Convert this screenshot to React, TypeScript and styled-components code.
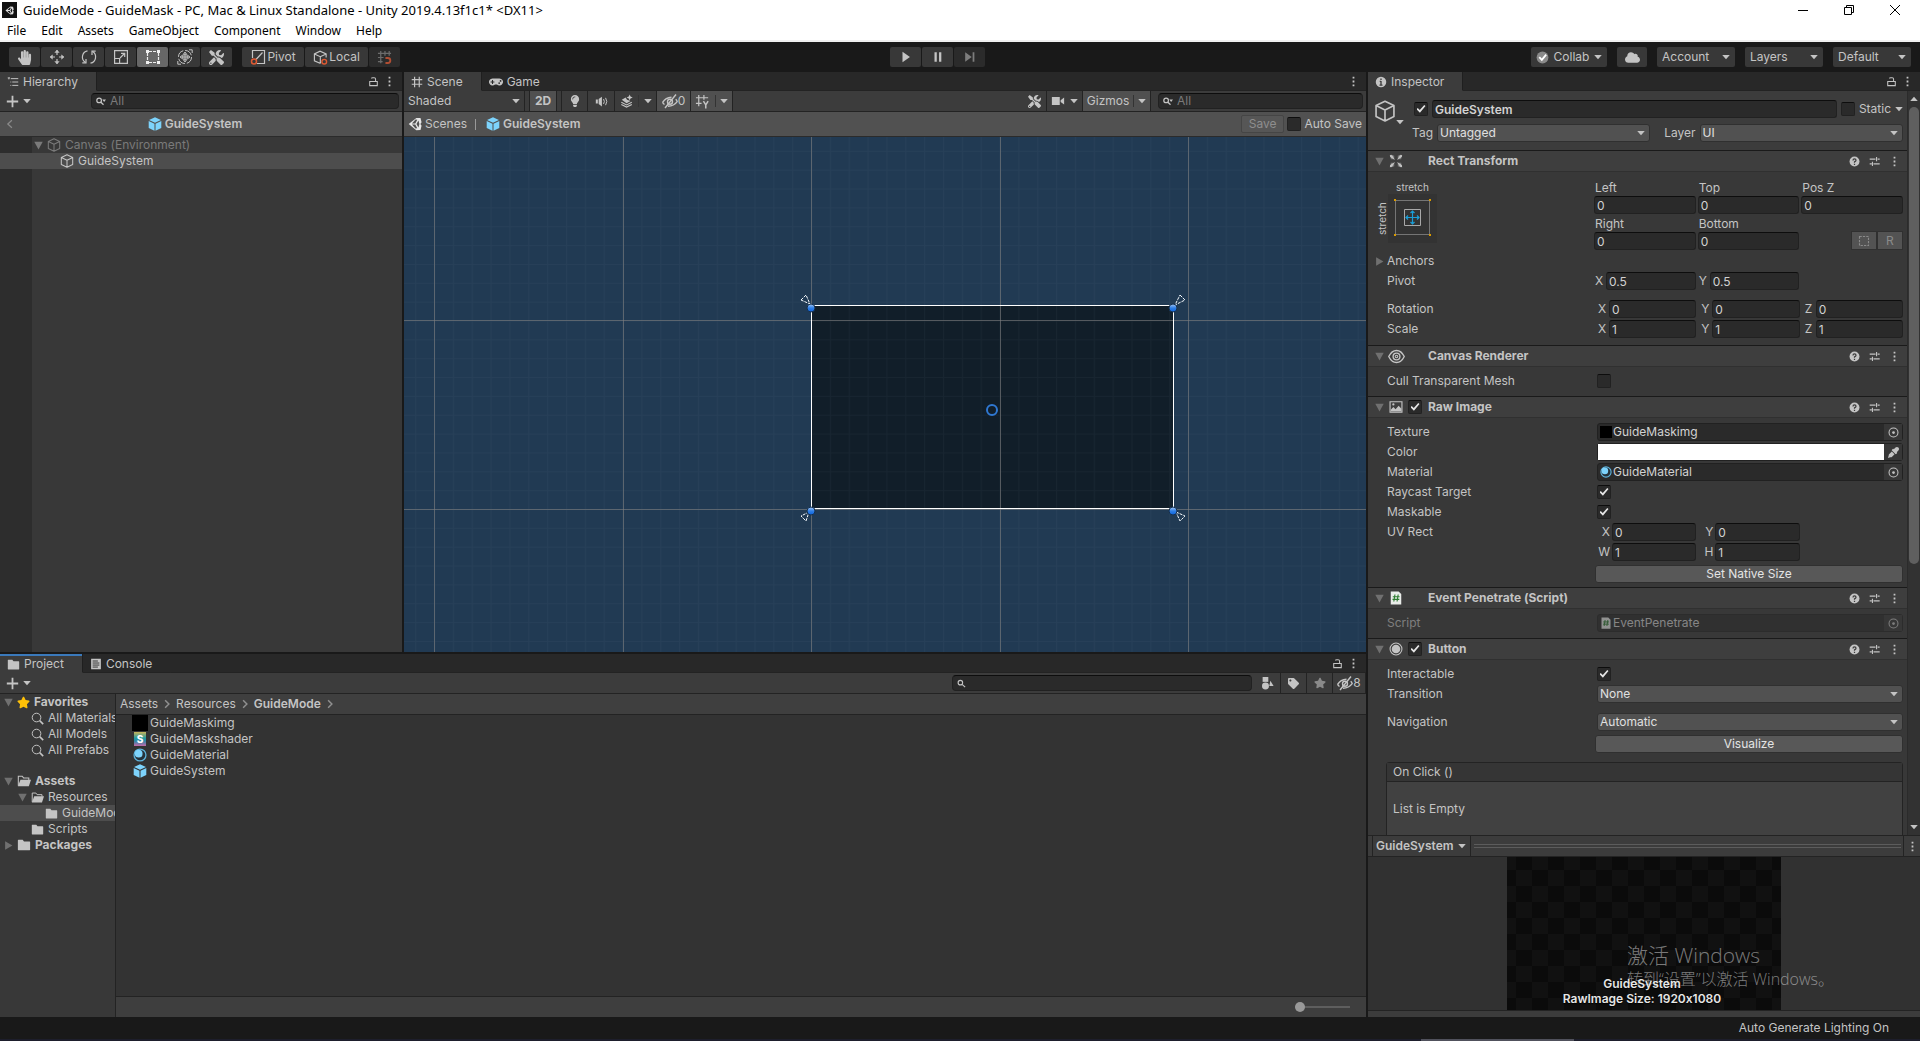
import React, { useId } from 'react';
import styled, { createGlobalStyle, css } from 'styled-components';
import { FaHandPaper, FaGamepad, FaCloud, FaLightbulb, FaTools, FaStar, FaTag, FaEyeDropper } from 'react-icons/fa';

const c = {
  chrome: '#191919',
  strip: '#282828',
  panel: '#383838',
  bar: '#3c3c3c',
  crumb: '#515151',
  line: '#232323',
  field: '#2a2a2a',
  text: '#c4c4c4',
  dim: '#7a7a7a',
  selected: '#4d4d4d',
  blue: '#7dd3fc',
};

const GlobalStyle = createGlobalStyle`
  *, *::before, *::after { box-sizing: border-box; }
  body { margin: 0; background: ${c.chrome}; }
  body, button, input, select {
    font-family: Inter, "Noto Sans CJK SC", sans-serif;
    font-size: 12px;
    line-height: 16px;
    font-feature-settings: "calt" 0;
    color: ${c.text};
  }
  button, input, select { margin: 0; padding: 0; border: 0; background: none; border-radius: 0; outline: 0; }
  ul { list-style: none; margin: 0; padding: 0; }
  svg { display: block; flex: none; }
`;

/* ---------- icons ---------- */

const stroke = { fill: 'none', stroke: 'currentColor' };
const cubeFaces = (
  <g fill="currentColor">
    <path d="M8 .4 14.800 3.300 8 6.600 1.200 3.300z" />
    <path d="M.8 4.500 7.400 7.600V15.600L.8 12.500z" />
    <path d="M15.200 4.500 8.600 7.600V15.600L15.200 12.500z" />
  </g>
);
const scriptPage = (
  <g>
    <path d="M2 .5h9L14 3.500v12H2z" fill="#e9ece9" />
    <path d="M6.800 4 5.500 12M10.500 4 9.200 12M4.300 6.600h7.800M4 9.500h7.800" stroke="#2e7d32" strokeWidth="1.300" fill="none" />
  </g>
);

const shapes: Record<string, React.ReactNode> = {
  unity: <g fill="currentColor" fillRule="evenodd"><path d="M.8 8 9.500 1l4.800.2L15.500 6l-1.300 2 1.300 2-1.200 4.800-4.800.2zM4.500 7.300H8.300L10.600 3.200 8.600 2.900zM4.500 8.700 8.600 13.100l2-.3L8.300 8.700zM9.700 8 11.900 12l1-3.500V7.500L11.900 4z" /></g>,
  move: <g {...stroke} strokeWidth="1.2"><path d="M8 1v5M8 10v5M1 8h5M10 8h5" /><path d="M5.800 3.400 8 1.200l2.200 2.200zM5.800 12.600 8 14.800l2.200-2.200zM3.400 5.800 1.200 8l2.200 2.200zM12.600 5.800 14.800 8l-2.200 2.200z" fill="currentColor" strokeWidth=".5" /></g>,
  rotate: <g {...stroke} strokeWidth="1.2"><path d="M6.500 1.800A6.300 6.300 0 0 0 4.500 13.400M9.500 14.200A6.300 6.300 0 0 0 11.500 2.600" /><path d="M1.300 13.800h3.700V10M14.700 2.200H11V6" /></g>,
  scale: <g {...stroke} strokeWidth="1.2"><path d="M1.600 1.600h12.800v12.800H1.600zM1.600 9.500h5v4.900M7 9l4.500-4.500M8 4.300h3.700V8" /></g>,
  rect: <g {...stroke} strokeWidth="1.2"><path d="M4 2.500h8M4 13.500h8M2.500 4v8M13.500 4v8" strokeDasharray="3 1" /><path d="M1 1h3v3H1zM12 1h3v3h-3zM1 12h3v3H1zM12 12h3v3h-3z" fill="currentColor" stroke="none" /></g>,
  transform: <g {...stroke}><circle cx="8" cy="8" r="6.500" strokeDasharray="8 2" /><path d="M8 3v10M3 8h10M6.500 4.800 8 3.200 9.500 4.800M6.500 11.200 8 12.800 9.500 11.200M4.800 6.500 3.200 8 4.800 9.500M11.200 6.500 12.800 8 11.200 9.500" /><path d="M12 .8h3.200V4M.8 12v3.200H4M5.800 5.800h4.400v4.400H5.800z" /></g>,
  pivot: <g {...stroke} strokeWidth="1.200"><path d="M2.500 9V1.500h12v13H7M6 10.500l6.500-7" /><circle cx="4" cy="12.500" r="2.500" stroke="#e05a33" strokeWidth="1.500" /></g>,
  local: <g {...stroke} strokeWidth="1.200"><path d="M8 14.500 1.500 11.500V4.200L7.500 1.200l6.500 3V8M1.500 4.200 7.800 7.200l6.200-3M7.800 7.200v7" /><circle cx="12" cy="12.500" r="2.500" stroke="#e05a33" strokeWidth="1.500" /></g>,
  snap: <g {...stroke} strokeWidth="1.300"><path d="M4 1v13M8.500 1v5M13 1v5M1 3.500h14M1 8h6M1 12.500h5" opacity=".8" /><path d="M9 8.500h2.500a2.700 2.700 0 0 1 0 5.400H9" stroke="#b04e33" strokeWidth="2" /></g>,
  hierarchy: <g {...stroke} strokeWidth="1.300"><path d="M5 3.500h10M7 8h8M7 12.500h8M1 2.500h3M2.500 2.500v2M4.500 8H5.700M4.500 12.500h1.200" /></g>,
  lock: <g {...stroke} strokeWidth="1.500"><path d="M2.500 8h11v6h-11zM11 8V4.500Q11 2.500 9 2.500H7Q5 2.500 5 3.800" /></g>,
  dots: <g fill="currentColor"><path d="M6.700 1h2.600v2.600H6.700zM6.700 6.700h2.600v2.600H6.700zM6.700 12.400h2.600V15H6.700z" /></g>,
  plus: <path d="M8 1v14M1 8h14" {...stroke} strokeWidth="2.200" />,
  down: <path d="M.5 4h15L8 12.500z" fill="currentColor" />,
  fold: <path d="M.5 1.500h15L8 15z" fill="currentColor" />,
  right: <path d="M2 .5v15L15 8z" fill="currentColor" />,
  up: <path d="M.5 12h15L8 3.500z" fill="currentColor" />,
  back: <path d="M11 2 4.500 8l6.500 6" {...stroke} strokeWidth="2" />,
  crumb: <path d="M5 2l6 6-6 6" {...stroke} strokeWidth="2.400" />,
  search: <g {...stroke} strokeWidth="2"><circle cx="6" cy="6.500" r="4" /><path d="M9 9.500l5.500 5" /></g>,
  searchMenu: <g><circle cx="5" cy="7" r="3.700" {...stroke} strokeWidth="2" /><path d="M7.500 9.500l4.500 4.500" {...stroke} strokeWidth="2" /><path d="M10 5.500h6L13 9.500z" fill="currentColor" /></g>,
  find: <g {...stroke} strokeWidth="1.200"><circle cx="6.800" cy="6.800" r="5.300" /><path d="M10.700 10.700l4.300 4.300" strokeWidth="2" /></g>,
  cube: <g {...stroke} strokeWidth="1.200" strokeLinejoin="round"><path d="M8 .9 14.500 4v8L8 15.200 1.500 12V4zM1.500 4 8 7.200 14.500 4M8 7.200v8" /></g>,
  prefab: cubeFaces,
  hash: <path d="M4.800 1v14M11 1v14M1 4.800h14M1 11h14" {...stroke} strokeWidth="1.600" />,
  speaker: <g><path d="M1 5.500h2.500v5H1zM4.500 5 8.500 2v12l-4-3z" fill="currentColor" /><path d="M10.500 5q2 3 0 6M13 3.500q3 4.500 0 9" {...stroke} strokeWidth="1.200" /></g>,
  fx: <g fill="currentColor"><path d="M2 6.500 6.500 4 8 6.500l4 1.500-4.500 2.600z" /><path d="M1.500 9.500 7.500 12.500l6-3M1.500 12l6 3 6-3" {...stroke} strokeWidth="1.300" /><path d="M11 .5l1 2.400 2.500 1L12 5l-1 2.400L10 5 7.500 3.900l2.500-1z" /></g>,
  eyeOff: <g {...stroke} strokeWidth="1.400"><path d="M2.500 11.500Q.8 10.300.8 9.200 3.500 4.500 9.500 4.200M13.700 6.200q1.200 1 1.500 2.400Q12 13 6 13.200M14 1.500 3 15" /><circle cx="8" cy="8.700" r="2.500" /></g>,
  gridY: <g {...stroke} strokeWidth="1.300"><path d="M4 1v12M9.500 1v5M1 4h13M1 10h6" /><path d="M9 7.500l2.500 4L14 7.500M11.500 11v4.500" strokeWidth="1.600" /></g>,
  camera: <path d="M1 3.500h9v9H1zM11 7l4-3v8l-4-3z" fill="currentColor" />,
  info: <g><circle cx="8" cy="8" r="7" fill="currentColor" /><path d="M8 3.200v2M8 6.800v5.700M6.300 7.200H8M6 12.200h4" stroke="#3c3c3c" strokeWidth="1.800" /></g>,
  help: <g><circle cx="8" cy="8" r="7.200" fill="currentColor" /><path d="M5.800 6.500q0-2.300 2.200-2.300t2.200 2Q10.200 7.500 8 8.600V9.800M8 11.200V13" fill="none" stroke="#3c3c3c" strokeWidth="1.800" /></g>,
  sliders: <path d="M1 4.500h8.500M12.500 4.500H15.500M11 1.500v6M1 11.500h3M6.500 11.500h9M5 8.500v6" {...stroke} strokeWidth="1.600" />,
  rectTransform: <g fill="currentColor"><path d="M1 1l2.500.3L6.800 6.800 1.300 3.500zM15 1l-2.500.3L9.200 6.800l5.500-3.300zM1 15l2.500-.3L6.800 9.200l-5.500 3.300zM15 15l-2.500-.3L9.200 9.200l5.500 3.300z" /><path d="M2 .5 6 2v4H2zM14 .5 10 2v4h4zM2 15.500 6 14v-4H2zM14 15.500 10 14v-4h4z" opacity=".45" /></g>,
  eye: <g {...stroke} strokeWidth="1.300"><path d="M.7 8Q3.500 2.300 8 2.300T15.300 8Q12.500 13.700 8 13.700T.7 8z" /><circle cx="8" cy="8" r="3.200" /><circle cx="8" cy="8" r="1.200" strokeWidth="1" /></g>,
  image: <g><path d="M1.200 2h13.600v12H1.200z" {...stroke} strokeWidth="1.300" /><path d="M2 13V11l3-3 2.500 2.500L11 6.500 14.200 10v3z" fill="currentColor" /><circle cx="5" cy="5" r="1.300" fill="currentColor" /></g>,
  target: <g><circle cx="8" cy="8" r="6.500" {...stroke} strokeWidth="1.500" /><circle cx="8" cy="8" r="2" fill="currentColor" /></g>,
  script: scriptPage,
  radio: <g><circle cx="8" cy="8" r="6.800" {...stroke} strokeWidth="1.200" /><circle cx="8" cy="8" r="4.900" fill="currentColor" /></g>,
  folder: <path d="M1 2.500Q1 2 1.500 2H6.500L8 4h6.500Q15 4 15 4.500V13.500Q15 14 14.500 14h-13Q1 14 1 13.500z" fill="currentColor" />,
  folderOpen: <g><path d="M1.500 13.500V2.500H6L7.500 4.500h6V7" {...stroke} strokeWidth="1.200" /><path d="M4 6.500H16L13.500 14H1z" fill="currentColor" /></g>,
  console: <g><path d="M1.500 1h13v14h-13z" fill="currentColor" /><path d="M3.500 4h7M3.500 6.700h9M3.500 9.400h9M3.500 12.100h7" stroke="#282828" strokeWidth="1.200" /></g>,
  types: <g fill="currentColor"><path d="M2 0h7v6H2z" /><circle cx="5.500" cy="11" r="4.300" /><path d="M11.500 4.500 15.500 11h-5.300z" /></g>,
  play: <path d="M4 2v12l8.500-6z" fill="currentColor" />,
  pause: <path d="M4 2.500h2.600v11H4zM9.200 2.500h2.600v11H9.200z" fill="currentColor" />,
  step: <path d="M2.500 2.500v11L10 8zM11 2.500h2v11h-2z" fill="currentColor" />,
  collab: <g><circle cx="8" cy="8" r="7.300" fill="#8a8a8a" /><path d="M4 7.500 7.200 11 12.500 4.500" fill="none" stroke="#fff" strokeWidth="2.200" /></g>,
  black: <path d="M0 0h16v16H0z" fill="#000" />,
  material: <g><circle cx="8" cy="8" r="6.800" fill="#26323a" stroke="#5fb3dc" strokeWidth="1.500" /><circle cx="6.500" cy="6.500" r="4.400" fill="#7dd3fc" /></g>,
  blueprint: <path d="M2 2h12v12H2z" {...stroke} strokeWidth="1.500" strokeDasharray="3 1.500" />,
};

const Svg = styled.svg<{ $color?: string }>`
  color: ${(p) => p.$color || 'inherit'};
`;
const Icon = ({ name, size = 14, color }: { name: string; size?: number; color?: string }) => (
  <Svg viewBox="0 0 16 16" width={size} height={size} $color={color} aria-hidden="true">
    {shapes[name]}
  </Svg>
);

const ShaderBadge = styled.span`
  width: 12px;
  height: 14px;
  font-size: 10px;
  line-height: 14px;
  font-weight: 800;
  text-align: center;
  color: #fff;
  background: linear-gradient(#c9b45a, #1f9aa0 45%, #2f86a8 65%, #c56aa8);
`;
const ShaderIcon = () => <ShaderBadge aria-hidden="true">S</ShaderBadge>;

/* ---------- shell ---------- */

const App = styled.div`
  display: flex;
  flex-direction: column;
  height: 100vh;
  overflow: hidden;
  background: ${c.chrome};
`;
const TitleBar = styled.header`
  display: flex;
  align-items: center;
  justify-content: space-between;
  height: 20px;
  padding: 0 17px 0 2px;
  background: #fff;
  color: #000;
  font-family: "Noto Sans", "Noto Sans CJK SC", sans-serif;
`;
const TitleText = styled.h1`
  display: flex;
  align-items: center;
  gap: 6px;
  margin: 0;
  font-size: 13px;
  font-weight: 400;
  white-space: nowrap;
`;
const AppBadge = styled.span`
  display: grid;
  place-items: center;
  width: 15px;
  height: 16px;
  background: #111;
  color: #ddd;
`;
const WindowButtons = styled.div`
  display: flex;
  gap: 30px;
`;
const WindowButton = styled.button`
  display: grid;
  place-items: center;
  width: 16px;
  height: 16px;
  color: #000;
`;
const MenuBar = styled.nav`
  display: flex;
  gap: 15px;
  height: 22px;
  padding: 2px 7px 0;
  background: #fff;
  border-bottom: 2px solid #f0f0f0;
`;
const MenuButton = styled.button`
  height: 18px;
  color: #000;
  font-family: "Noto Sans", "Noto Sans CJK SC", sans-serif;
`;
const MainBar = styled.div`
  display: grid;
  grid-template-columns: 1fr 140px 1fr;
  align-items: center;
  height: 30px;
  padding: 0 9px;
`;
const Group = styled.div<{ $gap?: number; $end?: boolean }>`
  display: flex;
  align-items: center;
  gap: ${(p) => p.$gap ?? 1}px;
  justify-content: ${(p) => (p.$end ? 'flex-end' : 'flex-start')};
`;
const ToolButton = styled.button<{ $w?: number; $on?: boolean; $off?: boolean; $spread?: boolean }>`
  display: flex;
  align-items: center;
  justify-content: ${(p) => (p.$spread ? 'space-between' : 'center')};
  gap: 1px;
  width: ${(p) => p.$w ?? 31}px;
  height: 20px;
  padding: 0 ${(p) => (p.$spread ? 5 : 0)}px;
  border-radius: 2px;
  background: ${(p) => (p.$on ? '#676767' : p.$off ? '#2b2b2b' : '#383838')};
  color: ${(p) => (p.$on ? '#f0f0f0' : p.$off ? '#7d7d7d' : c.text)};
`;
const Workspace = styled.main`
  flex: 1;
  min-height: 0;
  display: grid;
  grid-template-columns: 1366fr 552fr;
  gap: 2px;
`;
const LeftSide = styled.div`
  min-width: 0;
  min-height: 0;
  display: grid;
  grid-template-rows: 580fr 363fr;
  gap: 2px;
`;
const TopRow = styled.div`
  min-height: 0;
  display: grid;
  grid-template-columns: 402fr 962fr;
  gap: 2px;
`;
const Panel = styled.section`
  min-width: 0;
  min-height: 0;
  display: flex;
  flex-direction: column;
  background: ${c.panel};
`;
const TabStrip = styled.div`
  flex: none;
  display: flex;
  height: 19px;
  background: ${c.strip};
`;
const Tab = styled.button<{ $active?: boolean; $focus?: boolean }>`
  display: flex;
  align-items: center;
  gap: 4px;
  padding: 2px 18px 0 7px;
  border-right: 1px solid ${(p) => (p.$active ? '#1f1f1f' : 'transparent')};
  border-bottom: 1px solid ${(p) => (p.$active ? 'transparent' : c.line)};
  background: ${(p) => (p.$active ? c.bar : 'transparent')};
  box-shadow: ${(p) => (p.$focus ? 'inset 0 2px #3a79bb' : 'none')};
`;
const StripEnd = styled.div`
  flex: 1;
  display: flex;
  align-items: center;
  justify-content: flex-end;
  gap: 4px;
  padding-right: 7px;
  border-bottom: 1px solid ${c.line};
`;
const IconButton = styled.button`
  display: grid;
  place-items: center;
  min-width: 12px;
  height: 16px;
`;
const Bar = styled.div`
  flex: none;
  display: flex;
  align-items: center;
  height: 21px;
  background: ${c.bar};
  border-bottom: 1px solid ${c.line};
`;
const AddButton = styled.button`
  display: flex;
  align-items: center;
  gap: 4px;
  width: 84px;
  padding-left: 6px;
`;
const SearchBox = styled.label<{ $w?: number }>`
  display: flex;
  align-items: center;
  gap: 4px;
  height: 16px;
  margin: 0 3px 0 7px;
  padding: 0 4px;
  background: ${c.field};
  border: 1px solid #212121;
  border-top-color: #0d0d0d;
  border-radius: 4px;
  ${(p) => (p.$w ? css`width: ${p.$w}px;` : css`flex: 1;`)}
  input { flex: 1; min-width: 0; height: 14px; }
  input::placeholder { color: ${c.dim}; opacity: 1; }
`;
const CrumbBar = styled.div`
  flex: none;
  display: flex;
  align-items: center;
  height: 25px;
  padding: 0 4px;
  background: ${c.crumb};
  border-bottom: 1px solid #2b2b2b;
`;
const Crumb = styled.button<{ $strong?: boolean }>`
  display: flex;
  align-items: center;
  gap: 3px;
  font-weight: ${(p) => (p.$strong ? 600 : 400)};
`;
const CenterCrumb = styled.div`
  flex: 1;
  display: flex;
  justify-content: center;
  padding-right: 24px;
`;

/* ---------- trees ---------- */

const TreeBox = styled.div`
  flex: 1;
  min-height: 0;
  background: linear-gradient(90deg, #2d2d2d 32px, ${c.panel} 32px);
`;
const TreeRow = styled.li<{ $indent: number; $selected?: boolean; $dim?: boolean; $strong?: boolean; $space?: boolean }>`
  display: flex;
  align-items: center;
  gap: 4px;
  height: 16px;
  margin-top: ${(p) => (p.$space ? 15 : 0)}px;
  padding-left: ${(p) => p.$indent}px;
  white-space: nowrap;
  overflow: hidden;
  color: ${(p) => (p.$dim ? c.dim : c.text)};
  font-weight: ${(p) => (p.$strong ? 700 : 400)};
  background: ${(p) => (p.$selected ? c.selected : 'transparent')};
`;

/* ---------- scene ---------- */

const SceneButton = styled.button<{ $w: number; $on?: boolean; $tight?: boolean }>`
  display: flex;
  align-items: center;
  justify-content: ${(p) => (p.$tight ? 'center' : 'space-evenly')};
  width: ${(p) => p.$w}px;
  height: 20px;
  border-right: 1px solid ${c.line};
  background: ${(p) => (p.$on ? '#505050' : 'transparent')};
`;
const BarGap = styled.span`
  width: 5px;
  height: 20px;
  border-right: 1px solid ${c.line};
`;
const Spacer = styled.span`
  flex: 1;
`;
const Rule = styled.span`
  width: 1px;
  height: 12px;
  background: #333;
`;
const CrumbRule = styled.span`
  width: 1px;
  height: 11px;
  margin: 0 10px 0 8px;
  background: #999;
`;
const SceneView = styled.div`
  flex: 1;
  min-height: 0;
  background: #213a53;
`;
const SaveButton = styled.button`
  width: 43px;
  height: 18px;
  margin-right: 3px;
  border: 1px solid #454545;
  border-radius: 2px;
  background: #565656;
  color: #8e8e8e;
`;
const TextLabel = styled.label`
  white-space: nowrap;
`;

/* ---------- form parts ---------- */

const Box = styled.input.attrs({ type: 'checkbox' })`
  appearance: none;
  flex: none;
  display: grid;
  place-items: center;
  width: 14px;
  height: 14px;
  background: ${c.field};
  border: 1px solid #212121;
  border-top-color: #0d0d0d;
  border-radius: 2px;
  &:checked::before {
    content: '';
    width: 9px;
    height: 8px;
    background: #e4e4e4;
    clip-path: polygon(0 52%, 14% 38%, 36% 64%, 86% 0, 100% 12%, 38% 98%);
  }
`;
const TextInput = styled.input.attrs({ type: 'text' })<{ $strong?: boolean }>`
  flex: 1;
  width: 100%;
  min-width: 0;
  height: 18px;
  padding: 0 2px;
  background: ${c.field};
  border: 1px solid #212121;
  border-top-color: #0d0d0d;
  border-radius: 3px;
  font-weight: ${(p) => (p.$strong ? 600 : 400)};
  color: #d2d2d2;
`;
const SelectShell = styled.span<{ $flat?: boolean; $w?: number }>`
  display: grid;
  align-items: center;
  ${(p) => (p.$w ? css`width: ${p.$w}px;` : css`flex: 1;`)}
  min-width: 0;
  height: ${(p) => (p.$flat ? 20 : 18)}px;
  border: ${(p) => (p.$flat ? 0 : 1)}px solid #303030;
  border-right: 1px solid ${(p) => (p.$flat ? c.line : '#303030')};
  border-radius: ${(p) => (p.$flat ? 0 : 3)}px;
  background: ${(p) => (p.$flat ? 'transparent' : '#515151')};
  > * { grid-area: 1 / 1; }
  > select { appearance: none; width: 100%; height: 16px; padding-left: ${(p) => (p.$flat ? 4 : 2)}px; color: ${(p) => (p.$flat ? c.text : '#e0e0e0')}; }
  > svg { justify-self: end; margin-right: 4px; pointer-events: none; }
`;
const Select = ({ id, value, label, flat, w }: { id?: string; value: string; label?: string; flat?: boolean; w?: number }) => (
  <SelectShell $flat={flat} $w={w}>
    <select id={id} aria-label={label} defaultValue={value}>
      <option>{value}</option>
    </select>
    <Icon name="down" size={8} />
  </SelectShell>
);
const PushButton = styled.button`
  height: 18px;
  margin-left: -2px;
  border: 1px solid #303030;
  border-radius: 3px;
  background: #585858;
  color: #e4e4e4;
`;

/* ---------- inspector ---------- */

const ObjectHead = styled.div`
  display: grid;
  grid-template-columns: 27px 1fr;
  gap: 8px;
  padding: 9px 4px 8px 8px;
  height: 59px;
  background: ${c.bar};
`;
const ObjectIcon = styled.div`
  display: flex;
  align-items: flex-end;
  height: 26px;
  > svg:first-child { align-self: flex-start; margin-left: -2px; }
`;
const ObjectRows = styled.div`
  display: grid;
  gap: 6px;
  align-content: start;
`;
const NameRow = styled.div`
  display: flex;
  align-items: center;
  gap: 4px;
  height: 18px;
  padding-left: 3px;
`;
const TagRow = styled.div`
  display: grid;
  grid-template-columns: 22px 212fr 42px 203fr;
  align-items: center;
  gap: 4px;
  height: 18px;
  > label { text-align: right; }
`;
const InspectorBody = styled.div`
  flex: 1;
  min-height: 0;
  display: grid;
  grid-template-columns: 1fr 13px;
`;
const InspectorScroll = styled.div`
  min-height: 0;
  overflow: hidden;
`;
const ScrollTrack = styled.div`
  display: flex;
  flex-direction: column;
  align-items: center;
  padding: 4px 0;
  background: #323232;
  border-left: 1px solid #2b2b2b;
`;
const ScrollThumb = styled.span`
  flex: 454;
  width: 10px;
  margin-top: 4px;
  border-radius: 5px;
  background: #5f5f5f;
`;
const ScrollRest = styled.span`
  flex: 258;
`;
const CompHead = styled.div`
  display: grid;
  grid-template-columns: 10px 16px 14px 1fr auto auto auto;
  align-items: center;
  justify-items: center;
  gap: 4px;
  height: 22px;
  padding: 0 5px 0 6px;
  background: #3e3e3e;
  border-top: 1px solid #1a1a1a;
  border-bottom: 1px solid #303030;
`;
const CompTitle = styled.h2`
  justify-self: start;
  margin: 0;
  padding-left: 2px;
  font-size: 12px;
  font-weight: 700;
`;
const HeadButton = styled.button`
  display: grid;
  place-items: center;
  width: 16px;
  height: 16px;
`;
const CompBody = styled.div<{ $top?: number; $bottom?: number }>`
  display: grid;
  gap: 2px;
  padding: ${(p) => p.$top ?? 5}px 4px ${(p) => p.$bottom ?? 6}px 19px;
`;
const Row = styled.div<{ $space?: boolean; $muted?: boolean; $wide?: boolean; $drop?: number }>`
  display: grid;
  grid-template-columns: ${(p) => (p.$wide ? 207 : 210)}px 1fr;
  align-items: center;
  height: 18px;
  margin-top: ${(p) => (p.$space ? 8 : p.$drop ?? 0)}px;
  opacity: ${(p) => (p.$muted ? 0.5 : 1)};
`;
const Foldout = styled.span`
  display: flex;
  align-items: center;
  gap: 3px;
  margin-left: -12px;
`;
const Cells = styled.div<{ $gap: number }>`
  display: grid;
  grid-template-columns: repeat(3, 1fr);
  column-gap: ${(p) => p.$gap}px;
`;
const AxisCell = styled.label<{ $label: number }>`
  display: grid;
  grid-template-columns: ${(p) => p.$label}px 1fr;
  align-items: center;
  > span { text-align: ${(p) => (p.$label > 12 ? 'right' : 'left')}; padding: 0 ${(p) => (p.$label > 12 ? 2 : 0)}px 0 1px; }
`;
const StackCell = styled.label`
  display: grid;
  grid-template-rows: 16px 18px;
  > span { padding-left: 1px; }
`;
const RectTop = styled.div`
  display: grid;
  grid-template-columns: 207px 1fr;
`;
const RectFields = styled(Cells)`
  row-gap: 2px;
`;
const ModeButtons = styled.div`
  display: flex;
  justify-content: flex-end;
  align-self: end;
`;
const ModeButton = styled.button`
  display: grid;
  place-items: center;
  width: 26px;
  height: 19px;
  border: 1px solid #303030;
  background: #535353;
  color: #8a8a8a;
`;
const AnchorWidget = styled.div`
  display: grid;
  grid-template-columns: 12px 49px;
  grid-template-rows: 14px 49px;
  margin-left: -11px;
  font-size: 10px;
  line-height: 14px;
  > :first-child { grid-column: 2; text-align: center; }
`;
const SideText = styled.span`
  writing-mode: vertical-rl;
  rotate: 180deg;
  text-align: center;
  line-height: 12px;
`;
const AnchorButton = styled.button`
  background: #333;
`;
const ObjectField = styled.div`
  display: flex;
  align-items: center;
  height: 18px;
  background: ${c.field};
  border: 1px solid #212121;
  border-radius: 3px;
`;
const ObjectName = styled.span`
  flex: 1;
  display: flex;
  align-items: center;
  gap: 1px;
  padding-left: 2px;
  color: #d2d2d2;
`;
const FieldButton = styled.button`
  display: grid;
  place-items: center;
  width: 18px;
  height: 16px;
  background: #373737;
`;
const ColorInput = styled.input.attrs({ type: 'color' })`
  appearance: none;
  flex: 1;
  height: 16px;
  &::-webkit-color-swatch-wrapper { padding: 0; }
  &::-webkit-color-swatch { border: 0; }
`;
const EventList = styled.div`
  margin-top: 7px;
  margin-left: -1px;
  border: 1px solid ${c.line};
  border-radius: 3px;
  background: #414141;
`;
const EventTitle = styled.div`
  height: 19px;
  padding: 1px 6px;
  background: #353535;
  border-bottom: 1px solid ${c.line};
`;
const EventEmpty = styled.div`
  height: 70px;
  padding: 19px 6px;
`;
const PreviewBar = styled.div`
  flex: none;
  display: flex;
  align-items: center;
  height: 22px;
  padding-left: 4px;
  background: ${c.bar};
  border-top: 1px solid ${c.line};
  border-bottom: 1px solid ${c.line};
`;
const PreviewName = styled.button`
  display: flex;
  align-items: center;
  gap: 4px;
  height: 20px;
  padding: 0 4px 0 3px;
  border: solid ${c.line};
  border-width: 0 1px;
  font-weight: 600;
`;
const DragHandle = styled.span`
  flex: 1;
  height: 4px;
  margin: 0 2px 0 3px;
  border: solid #5c5c5c;
  border-width: 1px 0;
`;
const PreviewMenu = styled.button`
  display: grid;
  place-items: center;
  width: 17px;
  height: 20px;
  border-left: 1px solid ${c.line};
`;
const Preview = styled.div`
  flex: none;
  display: grid;
  justify-content: center;
  height: 153px;
  background: #313131;
`;
const PreviewImage = styled.div`
  display: flex;
  flex-direction: column;
  justify-content: flex-end;
  align-items: center;
  width: 274px;
  padding: 0 4px 4px 0;
  background: repeating-conic-gradient(#0b0b0b 0 25%, #111 0 50%) 9px 13px / 32px 32px;
  font-weight: 600;
  line-height: 15px;
  color: #e6e6e6;
  text-shadow: 0 1px 1px #000;
`;
const PreviewFoot = styled.div`
  flex: none;
  height: 7px;
  background: ${c.bar};
  border-top: 1px solid ${c.line};
`;

/* ---------- project ---------- */

const ProjectBody = styled.div`
  flex: 1;
  min-height: 0;
  display: grid;
  grid-template-columns: 116px 1fr;
`;
const FolderTree = styled.ul`
  overflow: hidden;
  border-right: 1px solid ${c.line};
`;
const FileArea = styled.div`
  display: flex;
  flex-direction: column;
  min-width: 0;
  background: #333;
`;
const PathBar = styled.nav`
  flex: none;
  display: flex;
  align-items: center;
  gap: 4px;
  height: 21px;
  padding: 0 4px;
  background: #3f3f3f;
  border-bottom: 1px solid ${c.line};
`;
const Files = styled.ul`
  flex: 1;
`;
const FileRow = styled.li`
  display: grid;
  grid-template-columns: 16px 1fr;
  align-items: center;
  justify-items: center;
  gap: 2px;
  height: 16px;
  padding-left: 16px;
  > :last-child { justify-self: start; }
`;
const SizeBar = styled.div`
  display: flex;
  align-items: center;
  justify-content: flex-end;
  height: 21px;
  padding-right: 16px;
  background: #3e3e3e;
  border-top: 1px solid ${c.line};
`;
const Slider = styled.input.attrs({ type: 'range' })`
  appearance: none;
  width: 55px;
  height: 12px;
  &::-webkit-slider-runnable-track { height: 2px; background: #5e5e5e; }
  &::-webkit-slider-thumb { appearance: none; width: 10px; height: 10px; margin-top: -4px; border-radius: 50%; background: #999; }
`;
const StatusBar = styled.footer`
  display: flex;
  align-items: center;
  justify-content: flex-end;
  height: 22px;
  padding-right: 31px;
`;
const TaskEdge = styled.div`
  height: 2px;
  background: linear-gradient(90deg, #1d1e2c 74%, #50515c 74% 82%, #1d1e2c 82%);
`;
const Watermark = styled.div`
  position: absolute;
  right: 86px;
  bottom: 51px;
  color: rgba(255, 255, 255, 0.46);
  font-family: "Open Sans", "Noto Sans CJK SC", sans-serif;
  font-size: 16px;
  line-height: 22px;
  font-weight: 300;
  white-space: nowrap;
  pointer-events: none;
`;
const WatermarkTitle = styled.div`
  font-size: 21px;
  line-height: 26px;
`;

/* ---------- compositions ---------- */

const PanelEnd = ({ lock = true }: { lock?: boolean }) => (
  <StripEnd>
    {lock && <IconButton aria-label="Lock"><Icon name="lock" size={11} /></IconButton>}
    <IconButton aria-label="Panel menu"><Icon name="dots" size={11} /></IconButton>
  </StripEnd>
);

const Component = ({ title, icon, checked, children, top, bottom }: {
  title: string; icon: string; checked?: boolean; children: React.ReactNode; top?: number; bottom?: number;
}) => (
  <section>
    <CompHead>
      <Icon name="fold" size={9} color="#707070" />
      <Icon name={icon} size={icon === 'eye' ? 17 : 14} />
      {checked ? <Box defaultChecked aria-label={`${title} enabled`} /> : <span />}
      <CompTitle>{title}</CompTitle>
      <HeadButton aria-label="Help"><Icon name="help" size={11} /></HeadButton>
      <HeadButton aria-label="Presets"><Icon name="sliders" size={11} /></HeadButton>
      <HeadButton aria-label="More"><Icon name="dots" size={11} /></HeadButton>
    </CompHead>
    <CompBody $top={top} $bottom={bottom}>{children}</CompBody>
  </section>
);

const Axis = ({ name, value, label = 12 }: { name: string; value: string; label?: number }) => (
  <AxisCell $label={label}>
    <span>{name}</span>
    <TextInput defaultValue={value} />
  </AxisCell>
);
const Stack = ({ name }: { name: string }) => (
  <StackCell>
    <span>{name}</span>
    <TextInput defaultValue="0" />
  </StackCell>
);
const CheckRow = ({ name, on }: { name: string; on?: boolean }) => {
  const id = useId();
  return (
    <Row>
      <label htmlFor={id}>{name}</label>
      <Box id={id} defaultChecked={on} />
    </Row>
  );
};
const SelectRow = ({ name, value, space }: { name: string; value: string; space?: boolean }) => {
  const id = useId();
  return (
    <Row $space={space}>
      <label htmlFor={id}>{name}</label>
      <Select id={id} value={value} />
    </Row>
  );
};
const ObjectRow = ({ name, value, icon, muted }: { name: string; value: string; icon: string; muted?: boolean }) => (
  <Row $muted={muted}>
    <span>{name}</span>
    <ObjectField>
      <ObjectName><Icon name={icon} size={12} />{value}</ObjectName>
      <FieldButton aria-label={`Pick ${name}`}><Icon name="target" size={11} /></FieldButton>
    </ObjectField>
  </Row>
);

const tools = ['move', 'rotate', 'scale', 'rect', 'transform'];
const menus = ['File', 'Edit', 'Assets', 'GameObject', 'Component', 'Window', 'Help'];

const handles = [[407, 171], [769, 171], [407, 374], [769, 374]];
const wedges = ['397,163 402,158 406,167', '776,158 781,163 771,168', '405,375 397,379 402,384', '772,375 781,379 776,384'];

const SceneCanvas = () => (
  <svg width="100%" height="100%" role="img" aria-label="Scene view">
    <defs>
      <pattern id="minor" x="30" y="-5" width="18.850" height="18.850" patternUnits="userSpaceOnUse">
        <path d="M.5 0V19M0 .5H19" stroke="#8c9aa8" strokeOpacity=".06" fill="none" />
      </pattern>
      <linearGradient id="ball" x1="0" y1="0" x2="0" y2="1">
        <stop offset="0" stopColor="#a9c8f2" />
        <stop offset=".5" stopColor="#2f7fe6" />
        <stop offset="1" stopColor="#0b62dd" />
      </linearGradient>
    </defs>
    <rect x="407" y="168" width="362" height="204" fill="#111e29" />
    <rect width="100%" height="100%" fill="url(#minor)" />
    <g fill="#808080" fillOpacity=".6">
      {[30, 219, 407, 596, 784].map((x) => <rect key={x} x={x} y="0" width="1" height="100%" />)}
      {[183, 372].map((y) => <rect key={y} x="0" y={y} width="100%" height="1" />)}
    </g>
    <rect x="407.500" y="168.500" width="362" height="203" fill="none" stroke="#fff" />
    {wedges.map((p) => <polygon key={p} points={p} fill="none" stroke="#f4f8fc" strokeDasharray="3 1" />)}
    {handles.map(([x, y]) => <circle key={`${x}-${y}`} cx={x} cy={y} r="4" fill="url(#ball)" stroke="#16304d" />)}
    <circle cx="588" cy="273" r="5" fill="none" stroke="#2f78d2" strokeWidth="2" />
  </svg>
);

const Hierarchy = () => (
  <Panel>
    <TabStrip>
      <Tab $active><Icon name="hierarchy" size={12} />Hierarchy</Tab>
      <PanelEnd />
    </TabStrip>
    <Bar>
      <AddButton aria-label="Create"><Icon name="plus" size={13} /><Icon name="down" size={8} /></AddButton>
      <SearchBox><Icon name="searchMenu" size={10} /><input placeholder="All" aria-label="Search hierarchy" /></SearchBox>
    </Bar>
    <CrumbBar>
      <IconButton aria-label="Back"><Icon name="back" size={10} color="#8a8a8a" /></IconButton>
      <CenterCrumb><Crumb $strong><Icon name="prefab" size={14} color={c.blue} />GuideSystem</Crumb></CenterCrumb>
    </CrumbBar>
    <TreeBox>
      <ul>
        <TreeRow $indent={34} $dim><Icon name="fold" size={9} /><Icon name="cube" size={14} />Canvas (Environment)</TreeRow>
        <TreeRow $indent={60} $selected><Icon name="cube" size={14} />GuideSystem</TreeRow>
      </ul>
    </TreeBox>
  </Panel>
);

const Scene = () => (
  <Panel>
    <TabStrip>
      <Tab $active><Icon name="hash" size={12} />Scene</Tab>
      <Tab><FaGamepad size={14} />Game</Tab>
      <PanelEnd lock={false} />
    </TabStrip>
    <Bar>
      <Select flat w={121} value="Shaded" label="Draw mode" />
      <BarGap />
      <SceneButton $w={27} $on><b>2D</b></SceneButton>
      <BarGap />
      <SceneButton $w={26} aria-label="Lighting"><FaLightbulb size={12} /></SceneButton>
      <SceneButton $w={27} aria-label="Audio"><Icon name="speaker" size={13} /></SceneButton>
      <SceneButton $w={42} aria-label="Effects"><Icon name="fx" size={14} /><Rule /><Icon name="down" size={8} /></SceneButton>
      <SceneButton $w={34} $on $tight><Icon name="eyeOff" size={16} />0</SceneButton>
      <SceneButton $w={42} $on aria-label="Grid"><Icon name="gridY" size={15} /><Rule /><Icon name="down" size={8} /></SceneButton>
      <Spacer />
      <SceneButton $w={25} aria-label="Tools"><FaTools size={13} /></SceneButton>
      <SceneButton $w={36} aria-label="Camera"><Icon name="camera" size={14} /><Icon name="down" size={8} /></SceneButton>
      <SceneButton $w={68} $on>Gizmos<Rule /><Icon name="down" size={8} /></SceneButton>
      <SearchBox $w={205}><Icon name="searchMenu" size={10} /><input placeholder="All" aria-label="Search scene" /></SearchBox>
    </Bar>
    <CrumbBar>
      <Crumb><Icon name="unity" size={14} color="#e6e6e6" />Scenes</Crumb>
      <CrumbRule />
      <Crumb $strong><Icon name="prefab" size={14} color={c.blue} />GuideSystem</Crumb>
      <Spacer />
      <SaveButton disabled>Save</SaveButton>
      <Box id="auto-save" />
      <TextLabel htmlFor="auto-save">&nbsp;Auto Save</TextLabel>
    </CrumbBar>
    <SceneView><SceneCanvas /></SceneView>
  </Panel>
);

const Project = () => (
  <Panel>
    <TabStrip>
      <Tab $active $focus><Icon name="folder" size={13} />Project</Tab>
      <Tab><Icon name="console" size={12} />Console</Tab>
      <PanelEnd />
    </TabStrip>
    <Bar>
      <AddButton aria-label="Create asset"><Icon name="plus" size={13} /><Icon name="down" size={8} /></AddButton>
      <Spacer />
      <SearchBox $w={300}><Icon name="search" size={9} /><input aria-label="Search project" /></SearchBox>
      <SceneButton $w={26} aria-label="Search by type"><Icon name="types" size={13} /></SceneButton>
      <SceneButton $w={26} aria-label="Search by label"><FaTag size={11} /></SceneButton>
      <SceneButton $w={26} aria-label="Favorite"><FaStar size={12} color="#8a8a8a" /></SceneButton>
      <SceneButton $w={33} $tight><Icon name="eyeOff" size={16} />8</SceneButton>
    </Bar>
    <ProjectBody>
      <FolderTree>
        <TreeRow $indent={4} $strong><Icon name="fold" size={9} color="#707070" /><FaStar size={13} color="#ffc107" />Favorites</TreeRow>
        <TreeRow $indent={31}><Icon name="find" size={13} />All Materials</TreeRow>
        <TreeRow $indent={31}><Icon name="find" size={13} />All Models</TreeRow>
        <TreeRow $indent={31}><Icon name="find" size={13} />All Prefabs</TreeRow>
        <TreeRow $indent={4} $strong $space><Icon name="fold" size={9} color="#707070" /><Icon name="folderOpen" size={14} />Assets</TreeRow>
        <TreeRow $indent={18}><Icon name="fold" size={9} color="#707070" /><Icon name="folderOpen" size={13} />Resources</TreeRow>
        <TreeRow $indent={45} $selected><Icon name="folder" size={13} />GuideMode</TreeRow>
        <TreeRow $indent={31}><Icon name="folder" size={13} />Scripts</TreeRow>
        <TreeRow $indent={4} $strong><Icon name="right" size={9} color="#707070" /><Icon name="folder" size={14} />Packages</TreeRow>
      </FolderTree>
      <FileArea>
        <PathBar>
          <Crumb>Assets</Crumb><Icon name="crumb" size={10} color="#8f8f8f" />
          <Crumb>Resources</Crumb><Icon name="crumb" size={10} color="#8f8f8f" />
          <Crumb $strong>GuideMode</Crumb><Icon name="crumb" size={10} color="#8f8f8f" />
        </PathBar>
        <Files>
          <FileRow><Icon name="black" size={16} /><span>GuideMaskimg</span></FileRow>
          <FileRow><ShaderIcon /><span>GuideMaskshader</span></FileRow>
          <FileRow><Icon name="material" size={14} /><span>GuideMaterial</span></FileRow>
          <FileRow><Icon name="prefab" size={14} color={c.blue} /><span>GuideSystem</span></FileRow>
        </Files>
        <SizeBar><Slider defaultValue={0} aria-label="Icon size" /></SizeBar>
      </FileArea>
    </ProjectBody>
  </Panel>
);

const Inspector = () => (
  <Panel>
    <TabStrip>
      <Tab $active><Icon name="info" size={12} />Inspector</Tab>
      <PanelEnd />
    </TabStrip>
    <InspectorBody>
      <InspectorScroll>
        <ObjectHead>
          <ObjectIcon><Icon name="cube" size={22} /><Icon name="down" size={8} /></ObjectIcon>
          <ObjectRows>
            <NameRow>
              <Box defaultChecked aria-label="Active" />
              <TextInput $strong defaultValue="GuideSystem" aria-label="Name" />
              <Box id="static" />
              <TextLabel htmlFor="static">Static</TextLabel>
              <Icon name="down" size={8} />
            </NameRow>
            <TagRow>
              <TextLabel htmlFor="tag">Tag</TextLabel>
              <Select id="tag" value="Untagged" />
              <TextLabel htmlFor="layer">Layer</TextLabel>
              <Select id="layer" value="UI" />
            </TagRow>
          </ObjectRows>
        </ObjectHead>

        <Component title="Rect Transform" icon="rectTransform" top={8} bottom={7}>
          <RectTop>
            <AnchorWidget>
              <span>stretch</span>
              <SideText>stretch</SideText>
              <AnchorButton aria-label="Anchor presets">
                <svg width="49" height="49" viewBox="0 0 49 49" fill="none">
                  <path d="M7.500 6.500h34v34h-34z" stroke="#757575" />
                  <path d="M16.500 15.500h16v16h-16z" stroke="#a8a8a8" />
                  <path d="M24.500 17v13M18 23.500h13M22.500 19l2-2 2 2M22.500 28l2 2 2-2M20 21.500l-2 2 2 2M29 21.500l2 2-2 2" stroke="#1a9fd8" strokeWidth="1.200" />
                  <path d="M6 5h2v2H6zM41 5h2v2h-2zM6 40h2v2H6zM41 40h2v2h-2z" fill="#d99a00" />
                </svg>
              </AnchorButton>
            </AnchorWidget>
            <RectFields $gap={2}>
              <Stack name="Left" />
              <Stack name="Top" />
              <Stack name="Pos Z" />
              <Stack name="Right" />
              <Stack name="Bottom" />
              <ModeButtons>
                <ModeButton aria-label="Blueprint mode"><Icon name="blueprint" size={12} /></ModeButton>
                <ModeButton>R</ModeButton>
              </ModeButtons>
            </RectFields>
          </RectTop>
          <Row $wide><Foldout><Icon name="right" size={9} color="#707070" />Anchors</Foldout></Row>
          <Row $wide><span>Pivot</span><Cells $gap={2}><Axis name="X" value="0.5" /><Axis name="Y" value="0.5" /></Cells></Row>
          <Row $space><span>Rotation</span><Cells $gap={4}><Axis name="X" value="0" /><Axis name="Y" value="0" /><Axis name="Z" value="0" /></Cells></Row>
          <Row><span>Scale</span><Cells $gap={4}><Axis name="X" value="1" /><Axis name="Y" value="1" /><Axis name="Z" value="1" /></Cells></Row>
        </Component>

        <Component title="Canvas Renderer" icon="eye">
          <CheckRow name="Cull Transparent Mesh" />
        </Component>

        <Component title="Raw Image" icon="image" checked bottom={4}>
          <ObjectRow name="Texture" value="GuideMaskimg" icon="black" />
          <Row>
            <label htmlFor="tint">Color</label>
            <ObjectField>
              <ColorInput id="tint" defaultValue="#ffffff" />
              <FieldButton aria-label="Pick color"><FaEyeDropper size={11} /></FieldButton>
            </ObjectField>
          </Row>
          <ObjectRow name="Material" value="GuideMaterial" icon="material" />
          <CheckRow name="Raycast Target" on />
          <CheckRow name="Maskable" on />
          <Row><span>UV Rect</span><Cells $gap={4}><Axis name="X" value="0" label={15} /><Axis name="Y" value="0" label={15} /></Cells></Row>
          <Row><span /><Cells $gap={4}><Axis name="W" value="1" label={15} /><Axis name="H" value="1" label={15} /></Cells></Row>
          <Row $drop={2}><span /><PushButton>Set Native Size</PushButton></Row>
        </Component>

        <Component title="Event Penetrate (Script)" icon="script">
          <ObjectRow name="Script" value="EventPenetrate" icon="script" muted />
        </Component>

        <Component title="Button" icon="radio" checked>
          <CheckRow name="Interactable" on />
          <SelectRow name="Transition" value="None" />
          <SelectRow name="Navigation" value="Automatic" space />
          <Row $drop={2}><span /><PushButton>Visualize</PushButton></Row>
          <EventList>
            <EventTitle>On Click ()</EventTitle>
            <EventEmpty>List is Empty</EventEmpty>
          </EventList>
        </Component>
      </InspectorScroll>
      <ScrollTrack aria-hidden="true">
        <Icon name="up" size={8} />
        <ScrollThumb />
        <ScrollRest />
        <Icon name="down" size={8} />
      </ScrollTrack>
    </InspectorBody>
    <PreviewBar>
      <PreviewName>GuideSystem<Icon name="down" size={8} /></PreviewName>
      <DragHandle />
      <PreviewMenu aria-label="Preview menu"><Icon name="dots" size={11} /></PreviewMenu>
    </PreviewBar>
    <Preview>
      <PreviewImage>
        <span>GuideSystem</span>
        <span>RawImage Size: 1920x1080</span>
      </PreviewImage>
    </Preview>
    <PreviewFoot />
  </Panel>
);

export default function UnityEditor() {
  return (
    <App>
      <GlobalStyle />
      <TitleBar>
        <TitleText>
          <AppBadge><Icon name="unity" size={9} /></AppBadge>
          GuideMode - GuideMask - PC, Mac &amp; Linux Standalone - Unity 2019.4.13f1c1* &lt;DX11&gt;
        </TitleText>
        <WindowButtons>
          <WindowButton aria-label="Minimize"><svg width="10" height="10"><path d="M0 5.500h10" stroke="#000" /></svg></WindowButton>
          <WindowButton aria-label="Restore"><svg width="10" height="10"><path d="M.5 2.500h7v7h-7zM2.500 2.500v-2h7v7h-2" stroke="#000" fill="none" /></svg></WindowButton>
          <WindowButton aria-label="Close"><svg width="10" height="10"><path d="M0 0l10 10M10 0 0 10" stroke="#000" /></svg></WindowButton>
        </WindowButtons>
      </TitleBar>
      <MenuBar>{menus.map((m) => <MenuButton key={m}>{m}</MenuButton>)}</MenuBar>
      <MainBar>
        <Group $gap={10}>
          <Group>
            <ToolButton aria-label="Hand"><FaHandPaper size={15} /></ToolButton>
            {tools.map((t) => <ToolButton key={t} $on={t === 'rect'} aria-label={t}><Icon name={t} size={16} /></ToolButton>)}
            <ToolButton aria-label="Custom tools"><FaTools size={15} /></ToolButton>
          </Group>
          <Group>
            <ToolButton $w={62}><Icon name="pivot" size={16} />Pivot</ToolButton>
            <ToolButton $w={63}><Icon name="local" size={15} />Local</ToolButton>
            <ToolButton $off aria-label="Snap"><Icon name="snap" size={15} /></ToolButton>
          </Group>
        </Group>
        <Group>
          <ToolButton aria-label="Play"><Icon name="play" size={14} /></ToolButton>
          <ToolButton aria-label="Pause"><Icon name="pause" size={14} /></ToolButton>
          <ToolButton $off aria-label="Step"><Icon name="step" size={14} /></ToolButton>
        </Group>
        <Group $gap={10} $end>
          <ToolButton $w={76} $spread><Icon name="collab" size={13} />Collab<Icon name="down" size={8} /></ToolButton>
          <ToolButton $w={30} aria-label="Services"><FaCloud size={15} /></ToolButton>
          <ToolButton $w={78} $spread>Account<Icon name="down" size={8} /></ToolButton>
          <ToolButton $w={78} $spread>Layers<Icon name="down" size={8} /></ToolButton>
          <ToolButton $w={78} $spread>Default<Icon name="down" size={8} /></ToolButton>
        </Group>
      </MainBar>
      <Workspace>
        <LeftSide>
          <TopRow>
            <Hierarchy />
            <Scene />
          </TopRow>
          <Project />
        </LeftSide>
        <Inspector />
      </Workspace>
      <StatusBar>Auto Generate Lighting On</StatusBar>
      <TaskEdge />
      <Watermark>
        <WatermarkTitle>激活 Windows</WatermarkTitle>
        转到“设置”以激活 Windows。
      </Watermark>
    </App>
  );
}
